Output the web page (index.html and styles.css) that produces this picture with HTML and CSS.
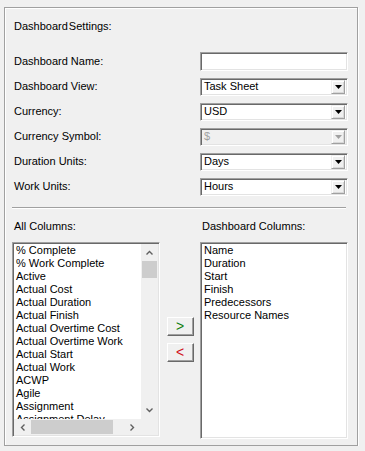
FILE: index.html
```html
<!DOCTYPE html>
<html>
<head>
<meta charset="utf-8">
<link rel="stylesheet" href="styles.css">
</head>
<body>
<div class="frame">
  <div class="heading">Dashboard Settings:</div>
  <div class="form">
    <div class="lbl">Dashboard Name:</div>
    <div class="textbox"></div>
    <div class="lbl">Dashboard View:</div>
    <div class="combo"><span class="val">Task Sheet</span><span class="drop"><svg width="7" height="4" viewBox="0 0 7 4"><path d="M0 0H7L3.5 4Z" fill="#000"/></svg></span></div>
    <div class="lbl">Currency:</div>
    <div class="combo"><span class="val">USD</span><span class="drop"><svg width="7" height="4" viewBox="0 0 7 4"><path d="M0 0H7L3.5 4Z" fill="#000"/></svg></span></div>
    <div class="lbl">Currency Symbol:</div>
    <div class="combo disabled"><span class="val">$</span><span class="drop"><svg width="7" height="4" viewBox="0 0 7 4"><path d="M0 0H7L3.5 4Z" fill="#a0a0a0"/></svg></span></div>
    <div class="lbl">Duration Units:</div>
    <div class="combo"><span class="val">Days</span><span class="drop"><svg width="7" height="4" viewBox="0 0 7 4"><path d="M0 0H7L3.5 4Z" fill="#000"/></svg></span></div>
    <div class="lbl">Work Units:</div>
    <div class="combo"><span class="val">Hours</span><span class="drop"><svg width="7" height="4" viewBox="0 0 7 4"><path d="M0 0H7L3.5 4Z" fill="#000"/></svg></span></div>
  </div>
  <div class="sep"></div>
  <div class="columns">
    <div class="col">
      <div class="collabel">All Columns:</div>
      <div class="listbox left">
        <div class="items">
          <div>% Complete</div>
          <div>% Work Complete</div>
          <div>Active</div>
          <div>Actual Cost</div>
          <div>Actual Duration</div>
          <div>Actual Finish</div>
          <div>Actual Overtime Cost</div>
          <div>Actual Overtime Work</div>
          <div>Actual Start</div>
          <div>Actual Work</div>
          <div>ACWP</div>
          <div>Agile</div>
          <div>Assignment</div>
          <div>Assignment Delay</div>
        </div>
        <div class="vscroll">
          <div class="sbtn"><svg width="7" height="5" viewBox="0 0 7 5"><path d="M0.5 4.5L3.5 1.5L6.5 4.5" fill="none" stroke="#606060" stroke-width="1.4"/></svg></div>
          <div class="vthumb"></div>
          <div class="vtrack"></div>
          <div class="sbtn"><svg width="7" height="5" viewBox="0 0 7 5"><path d="M0.5 0.5L3.5 3.5L6.5 0.5" fill="none" stroke="#606060" stroke-width="1.4"/></svg></div>
        </div>
        <div class="hscroll">
          <div class="hbtn"><svg width="5" height="7" viewBox="0 0 5 7"><path d="M4.5 0.5L1.5 3.5L4.5 6.5" fill="none" stroke="#606060" stroke-width="1.4"/></svg></div>
          <div class="hthumb"></div>
          <div class="htrack"></div>
          <div class="hbtn"><svg width="5" height="7" viewBox="0 0 5 7"><path d="M0.5 0.5L3.5 3.5L0.5 6.5" fill="none" stroke="#606060" stroke-width="1.4"/></svg></div>
        </div>
        <div class="corner"></div>
      </div>
    </div>
    <div class="buttons">
      <div class="btn add">&gt;</div>
      <div class="btn remove">&lt;</div>
    </div>
    <div class="col">
      <div class="collabel">Dashboard Columns:</div>
      <div class="listbox right">
        <div class="items">
          <div>Name</div>
          <div>Duration</div>
          <div>Start</div>
          <div>Finish</div>
          <div>Predecessors</div>
          <div>Resource Names</div>
        </div>
      </div>
    </div>
  </div>
</div>
</body>
</html>
```

FILE: styles.css
```css
html, body {
  margin: 0;
  padding: 0;
  background: #f0f0f0;
}
body {
  padding: 7px 0 0 4px;
  font-family: "Liberation Sans", Arial, sans-serif;
  font-size: 11px;
  color: #000;
}
.frame {
  box-sizing: border-box;
  width: 354px;
  height: 439px;
  border: 1px solid #a0a0a0;
  box-shadow: inset 1px 1px 0 #fff, 1px 1px 0 #fff;
  padding: 12px 8px 0 9px;
}
.heading {
  line-height: 13px;
  height: 13px;
  word-spacing: -2px;
}
.form {
  margin-top: 19px;
  display: grid;
  grid-template-columns: 186px 148px;
  grid-auto-rows: 19px;
  row-gap: 6px;
  align-items: center;
}
.lbl {
  line-height: 13px;
}
.textbox, .combo {
  box-sizing: border-box;
  height: 19px;
  background: #fff;
  border-top: 1px solid #a0a0a0;
  border-left: 1px solid #a0a0a0;
  border-right: 1px solid #fff;
  border-bottom: 1px solid #fff;
  box-shadow: inset 1px 1px 0 #696969, inset -1px -1px 0 #e3e3e3;
}
.combo {
  display: flex;
  align-items: center;
  height: 18px;
  padding: 2px 2px 2px 3px;
}
.combo .val {
  flex: 1;
  line-height: 13px;
}
.combo .drop {
  box-sizing: border-box;
  width: 14px;
  height: 14px;
  background: #f0f0f0;
  border-top: 1px solid #f0f0f0;
  border-left: 1px solid #f0f0f0;
  border-right: 1px solid #a0a0a0;
  border-bottom: 1px solid #a0a0a0;
  box-shadow: inset 1px 1px 0 #fff, inset -1px -1px 0 #d8d8d8;
  display: flex;
  align-items: center;
  justify-content: center;
}
.combo.disabled {
  background: #f0f0f0;
  color: #a0a0a0;
}
.sep {
  margin: 11px 0 0 -2px;
  width: 334px;
  height: 1px;
  background: #a0a0a0;
  border-bottom: 1px solid #fff;
}
.columns {
  margin: 11px 0 0 -2px;
  display: flex;
}
.col {
  width: 148px;
  display: flex;
  flex-direction: column;
}
.collabel {
  line-height: 13px;
  padding-left: 2px;
  margin-bottom: 9px;
}
.listbox {
  box-sizing: border-box;
  position: relative;
  background: #fff;
  border-top: 1px solid #a0a0a0;
  border-left: 1px solid #a0a0a0;
  border-right: 1px solid #fff;
  border-bottom: 1px solid #fff;
  box-shadow: inset 1px 1px 0 #696969, inset -1px -1px 0 #e3e3e3;
  overflow: hidden;
}
.listbox.left {
  height: 195px;
}
.listbox.right {
  height: 197px;
}
.items {
  padding: 1px 0 0 3px;
  line-height: 13px;
  white-space: nowrap;
}
.vscroll {
  position: absolute;
  right: 1px;
  top: 1px;
  bottom: 17px;
  width: 17px;
  background: #f0f0f0;
  display: flex;
  flex-direction: column;
}
.sbtn {
  height: 17px;
  display: flex;
  align-items: center;
  justify-content: center;
}
.vthumb {
  height: 17px;
  margin: 0 1px;
  background: #cdcdcd;
}
.vtrack {
  flex: 1;
}
.hscroll {
  position: absolute;
  left: 1px;
  right: 18px;
  bottom: 1px;
  height: 16px;
  background: #f0f0f0;
  display: flex;
}
.hbtn {
  width: 17px;
  display: flex;
  align-items: center;
  justify-content: center;
}
.hthumb {
  width: 82px;
  margin: 1px 0;
  background: #cdcdcd;
}
.htrack {
  flex: 1;
}
.corner {
  position: absolute;
  right: 1px;
  bottom: 1px;
  width: 17px;
  height: 16px;
  background: #f0f0f0;
}
.buttons {
  width: 40px;
  margin-top: 22px;
  height: 195px;
  display: flex;
  flex-direction: column;
  align-items: center;
  justify-content: center;
  gap: 7px;
}
.btn {
  box-sizing: border-box;
  width: 27px;
  height: 19px;
  background: #f0f0f0;
  border-top: 1px solid #fff;
  border-left: 1px solid #fff;
  border-right: 1px solid #696969;
  border-bottom: 1px solid #696969;
  box-shadow: inset -1px -1px 0 #a0a0a0;
  text-align: center;
  font-size: 14px;
  line-height: 16px;
}
.btn.add {
  color: #108010;
}
.btn.remove {
  color: #d01020;
}
```
